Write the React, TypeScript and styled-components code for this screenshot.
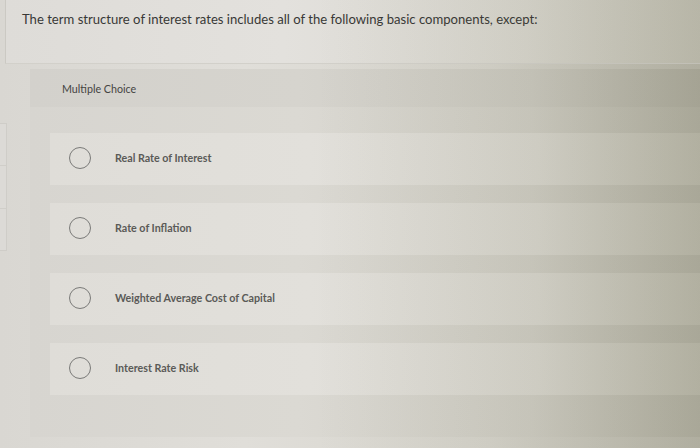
import React from "react";
import styled, { createGlobalStyle } from "styled-components";

const Global = createGlobalStyle`
  html, body { margin: 0; padding: 0; }
  body {
    background: #dcdad5;
    font-family: Lato, "Open Sans", "Liberation Sans", sans-serif;
    -webkit-font-smoothing: antialiased;
  }
`;

const Page = styled.div`
  position: relative;
  width: 700px;
  height: 448px;
  overflow: hidden;
  background: linear-gradient(to right, #d9d7d2 0%, #e0ded9 35%, #d6d4cc 70%, #bebcb0 100%);
  display: flex;
  flex-direction: column;
`;

const Vignette = styled.div`
  position: absolute;
  inset: 0;
  pointer-events: none;
  background: linear-gradient(to right, rgba(255,255,255,0) 45%, rgba(90,90,60,0.14) 100%);
`;

const QuestionCard = styled.div`
  margin-left: 5px;
  height: 64px;
  box-sizing: border-box;
  border-left: 1px solid #cbc9c3;
  border-bottom: 1px solid #d2d0ca;
  background: linear-gradient(to right, #dedcd8 0%, #e3e1dd 40%, #d9d7cf 75%, #c7c5b9 100%);
  padding: 11px 0 0 16px;
`;

const QuestionText = styled.p`
  margin: 0;
  font-size: 13.1px;
  color: #383836;
`;

const Body = styled.div`
  flex: 1;
  display: grid;
  grid-template-columns: 30px 1fr;
  padding-top: 5px;
  padding-bottom: 11px;
`;

const Gutter = styled.div`
  display: flex;
  flex-direction: column;
  padding-top: 54px;
`;

const SideTab = styled.div`
  width: 7px;
  height: 128px;
  box-sizing: border-box;
  border: 1px solid #cfcdc8;
  border-left: none;
  background: #dcdad6;
  display: flex;
  flex-direction: column;
`;

const SideSlot = styled.div`
  flex: 1;
  border-bottom: 1px solid #d0cec9;
  &:last-child { border-bottom: none; }
`;

const Panel = styled.section`
  background: linear-gradient(to right, #d7d5d0 0%, #dbd9d3 40%, #cfcdc4 75%, #b6b4a7 100%);
  display: flex;
  flex-direction: column;
`;

const PanelHeader = styled.div`
  height: 38px;
  display: flex;
  align-items: center;
  padding-left: 32px;
  background: linear-gradient(to right, #d3d1cc 0%, #d6d4ce 40%, #cbc9c0 75%, #b1afa2 100%);
`;

const HeaderLabel = styled.span`
  font-size: 10.7px;
  color: #444442;
`;

const Choices = styled.div`
  display: flex;
  flex-direction: column;
  gap: 18px;
  margin: 26px 0 0 20px;
`;

const ChoiceRow = styled.label`
  height: 52px;
  display: flex;
  align-items: center;
  background: linear-gradient(to right, #dfddd8 0%, #e2e0db 40%, #d8d6ce 75%, #c0beb1 100%);
`;

const Radio = styled.span`
  width: 22px;
  height: 22px;
  box-sizing: border-box;
  border-radius: 50%;
  border: 1.5px solid #7a7a78;
  margin-left: 19px;
  margin-right: 24px;
  margin-top: -2px;
  flex: none;
`;

const ChoiceText = styled.span`
  font-size: 10.7px;
  font-weight: 700;
  color: #5a5a57;
  margin-top: -3px;
`;

const options = [
  "Real Rate of Interest",
  "Rate of Inflation",
  "Weighted Average Cost of Capital",
  "Interest Rate Risk",
];

export default function App() {
  return (
    <>
      <Global />
      <Page>
        <QuestionCard>
          <QuestionText>
            The term structure of interest rates includes all of the following basic components, except:
          </QuestionText>
        </QuestionCard>
        <Body>
          <Gutter>
            <SideTab>
              <SideSlot />
              <SideSlot />
              <SideSlot />
            </SideTab>
          </Gutter>
          <Panel>
            <PanelHeader>
              <HeaderLabel>Multiple Choice</HeaderLabel>
            </PanelHeader>
            <Choices>
              {options.map((o) => (
                <ChoiceRow key={o}>
                  <Radio />
                  <ChoiceText>{o}</ChoiceText>
                </ChoiceRow>
              ))}
            </Choices>
          </Panel>
        </Body>
        <Vignette />
      </Page>
    </>
  );
}
